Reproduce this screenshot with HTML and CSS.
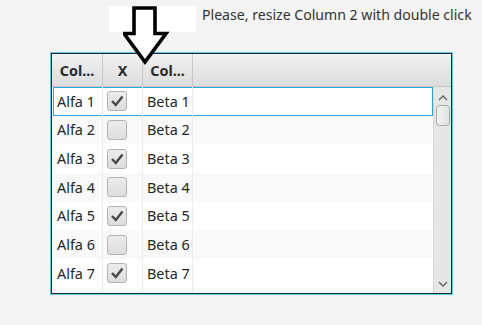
FILE: index.html
```html
<!DOCTYPE html>
<html>
<head>
<meta charset="utf-8">
<link rel="stylesheet" href="styles.css">
</head>
<body>
<div class="top">
  <div class="imgbox"></div>
  <div class="hint">Please, resize Column 2 with double click</div>
</div>
<svg class="arrow" width="50" height="62" viewBox="0 0 50 62">
  <path d="M11 2 H32 V27.5 H43 L22 56 L1 27.5 H11 Z" fill="#fff" stroke="#000" stroke-width="3.6" stroke-linejoin="miter"/>
</svg>
<div class="table">
  <div class="header">
    <div class="hcell c1">Col...</div>
    <div class="hcell c2">X</div>
    <div class="hcell c3">Col...</div>
    <div class="hcell filler"></div>
  </div>
  <div class="body">
    <div class="rows">
      <div class="row odd focused"><div class="cell c1">Alfa 1</div><div class="cell c2"><span class="cb on"><svg viewBox="0 0 18 18"><path d="M4 9 L7.8 13 L14.5 4.5"/></svg></span></div><div class="cell c3">Beta 1</div><div class="cell filler"></div></div>
      <div class="row even"><div class="cell c1">Alfa 2</div><div class="cell c2"><span class="cb"></span></div><div class="cell c3">Beta 2</div><div class="cell filler"></div></div>
      <div class="row odd"><div class="cell c1">Alfa 3</div><div class="cell c2"><span class="cb on"><svg viewBox="0 0 18 18"><path d="M4 9 L7.8 13 L14.5 4.5"/></svg></span></div><div class="cell c3">Beta 3</div><div class="cell filler"></div></div>
      <div class="row even"><div class="cell c1">Alfa 4</div><div class="cell c2"><span class="cb"></span></div><div class="cell c3">Beta 4</div><div class="cell filler"></div></div>
      <div class="row odd"><div class="cell c1">Alfa 5</div><div class="cell c2"><span class="cb on"><svg viewBox="0 0 18 18"><path d="M4 9 L7.8 13 L14.5 4.5"/></svg></span></div><div class="cell c3">Beta 5</div><div class="cell filler"></div></div>
      <div class="row even"><div class="cell c1">Alfa 6</div><div class="cell c2"><span class="cb"></span></div><div class="cell c3">Beta 6</div><div class="cell filler"></div></div>
      <div class="row odd"><div class="cell c1">Alfa 7</div><div class="cell c2"><span class="cb on"><svg viewBox="0 0 18 18"><path d="M4 9 L7.8 13 L14.5 4.5"/></svg></span></div><div class="cell c3">Beta 7</div><div class="cell filler"></div></div>
      <div class="row even"><div class="cell c1"></div><div class="cell c2"></div><div class="cell c3"></div><div class="cell filler"></div></div>
    </div>
    <div class="vscroll">
      <svg class="sarrow" width="10" height="6" viewBox="0 0 10 6"><path d="M1 5 L5 1 L9 5" fill="none" stroke="#6b6b6b" stroke-width="1.5"/></svg>
      <div class="thumb"></div>
      <div class="track"></div>
      <svg class="sarrow" width="10" height="6" viewBox="0 0 10 6"><path d="M1 1 L5 5 L9 1" fill="none" stroke="#6b6b6b" stroke-width="1.5"/></svg>
    </div>
  </div>
</div>
</body>
</html>
```
FILE: styles.css
```css
html, body {
  margin: 0;
  padding: 0;
}
body {
  width: 482px;
  height: 325px;
  background: #f4f4f4;
  font-family: "Noto Sans", "Open Sans", sans-serif;
  font-size: 14.4px;
  color: #262626;
  position: relative;
  overflow: hidden;
}
.top {
  display: flex;
  align-items: flex-start;
  height: 53px;
  padding-left: 109px;
  box-sizing: border-box;
}
.imgbox {
  width: 87px;
  height: 26px;
  margin-top: 6px;
  background: #ffffff;
}
.hint {
  margin-left: 6px;
  margin-top: 5px;
  line-height: 20px;
  font-size: 14.1px;
  color: #333;
}
.arrow {
  position: absolute;
  left: 123px;
  top: 6px;
}
.table {
  margin-left: 51px;
  width: 401px;
  height: 241px;
  box-sizing: border-box;
  border: 1px solid #1d2d33;
  box-shadow: 0 0 0 1px #66c4e6;
  background: #fff;
  display: flex;
  flex-direction: column;
  overflow: hidden;
}
.header {
  display: flex;
  height: 32px;
  flex: none;
  border-bottom: 1px solid #c5c5c5;
  background: linear-gradient(#f2f2f2, #e4e4e4 60%, #dddddd);
}
.hcell {
  box-sizing: border-box;
  border-right: 1px solid #c8c8c8;
  font-weight: bold;
  display: flex;
  align-items: center;
  justify-content: center;
  color: #2b2b2b;
}
.c1 { width: 51px; flex: none; }
.c2 { width: 40px; flex: none; }
.c3 { width: 50px; flex: none; }
.filler { flex: 1; border-right: none; }
.body {
  flex: 1;
  display: flex;
  min-height: 0;
}
.rows {
  flex: 1;
  overflow: hidden;
}
.row {
  display: flex;
  height: 28.67px;
  box-sizing: border-box;
}
.row.odd { background: #ffffff; }
.row.even { background: #f9f9f9; }
.row.focused {
  box-shadow: inset 0 0 0 1px #2aa7d9;
  margin-left: 1px;
}
.row.focused .c1 { width: 50px; }
.cell {
  box-sizing: border-box;
  border-right: 1px solid #ececec;
  display: flex;
  align-items: center;
  padding-left: 4px;
  white-space: nowrap;
}
.row .cell.filler { border-right: none; }
.cell.c1 { padding-left: 5px; }
.row.focused .cell.c1 { padding-left: 4px; }
.cell.c2 { padding-left: 4px; }
.cb {
  width: 20px;
  height: 20px;
  box-sizing: border-box;
  border: 1px solid #b3b3b3;
  border-radius: 3px;
  background: linear-gradient(#ececec, #dddddd);
  display: block;
}
.cb svg {
  width: 18px;
  height: 18px;
  display: block;
}
.cb svg path {
  fill: none;
  stroke: #474747;
  stroke-width: 2.4;
}
.vscroll {
  width: 18px;
  flex: none;
  background: #e6e6e6;
  border-left: 1px solid #d6d6d6;
  box-sizing: border-box;
  display: flex;
  flex-direction: column;
  align-items: center;
  padding: 8px 0 6px;
}
.sarrow { flex: none; }
.thumb {
  width: 14px;
  height: 21px;
  margin-top: 4px;
  box-sizing: border-box;
  border: 1px solid #a9a9a9;
  border-radius: 4px;
  background: linear-gradient(90deg, #f3f3f3, #e2e2e2);
}
.track { flex: 1; }
```
